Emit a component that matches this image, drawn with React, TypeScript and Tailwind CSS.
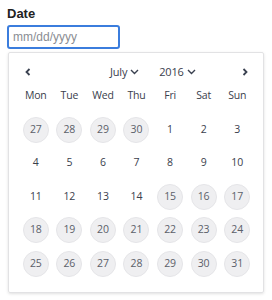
import React from "react";

const weekdays = ["Mon", "Tue", "Wed", "Thu", "Fri", "Sat", "Sun"];

type Day = { n: number; marked: boolean };

const days: Day[] = [
  ...[27, 28, 29, 30].map((n) => ({ n, marked: true })),
  ...Array.from({ length: 31 }, (_, i) => ({ n: i + 1, marked: i + 1 >= 15 })),
];

function ChevronDown() {
  return (
    <svg width="9" height="6" viewBox="0 0 9 6" className="ml-[3px]">
      <polyline points="1,1 4.5,4.5 8,1" fill="none" stroke="#3a4150" strokeWidth="1.4" />
    </svg>
  );
}

function Arrow({ dir }: { dir: "left" | "right" }) {
  return (
    <svg width="6" height="8" viewBox="0 0 6 8">
      <polyline
        points={dir === "left" ? "4.5,1 1.5,4 4.5,7" : "1.5,1 4.5,4 1.5,7"}
        fill="none"
        stroke="#3a4150"
        strokeWidth="1.8"
      />
    </svg>
  );
}

export default function App() {
  return (
    <div className="w-[272px] h-[300px] bg-white px-[7px] pt-[5px] font-['Open_Sans',sans-serif] text-[#3a404c]">
      {/* Label + input */}
      <div className="font-['Liberation_Sans',Arial,sans-serif] text-[13px] leading-[18px] font-bold text-[#222]">Date</div>
      <div className="mt-[2px] w-[113px] h-[24px] border-2 border-[#3b7ddd] rounded-[3px] flex items-center px-[4px]">
        <span className="font-['Liberation_Sans',Arial,sans-serif] text-[12px] text-[#8a8d93]">mm/dd/yyyy</span>
      </div>

      {/* Calendar popup */}
      <div className="ml-[1px] mt-[3px] w-[256px] border border-[#e2e2e4] rounded-[2px] shadow-[0_1px_3px_rgba(0,0,0,0.12)] pt-[7px] pb-[11px]">
        <div className="flex items-center h-[24px] pl-[16px] pr-[15px]">
          <Arrow dir="left" />
          <div className="ml-[79px] flex items-center text-[11px] tracking-[-0.2px]">
            July
            <ChevronDown />
          </div>
          <div className="ml-[20px] flex items-center text-[11px] tracking-[-0.2px]">
            2016
            <ChevronDown />
          </div>
          <div className="ml-auto">
            <Arrow dir="right" />
          </div>
        </div>

        <div className="ml-[10px] mt-[1px] w-[235px] h-[22px] grid grid-cols-7 items-center text-[10.5px] tracking-[-0.2px]">
          {weekdays.map((w) => (
            <div key={w} className="text-center">{w}</div>
          ))}
        </div>

        <div className="ml-[10px] mt-[6px] w-[235px] grid grid-cols-7 auto-rows-[33.5px] text-[10.5px] tracking-[-0.1px]">
          {days.map((d, i) => (
            <div key={i} className="flex items-center justify-center">
              {d.marked ? (
                <div className="w-[26px] h-[26px] rounded-full bg-[#efeff1] border border-[#e5e5e8] flex items-center justify-center text-[#5b6069]">
                  {d.n}
                </div>
              ) : (
                <span className="text-[#3a404c]">{d.n}</span>
              )}
            </div>
          ))}
        </div>
      </div>
    </div>
  );
}
